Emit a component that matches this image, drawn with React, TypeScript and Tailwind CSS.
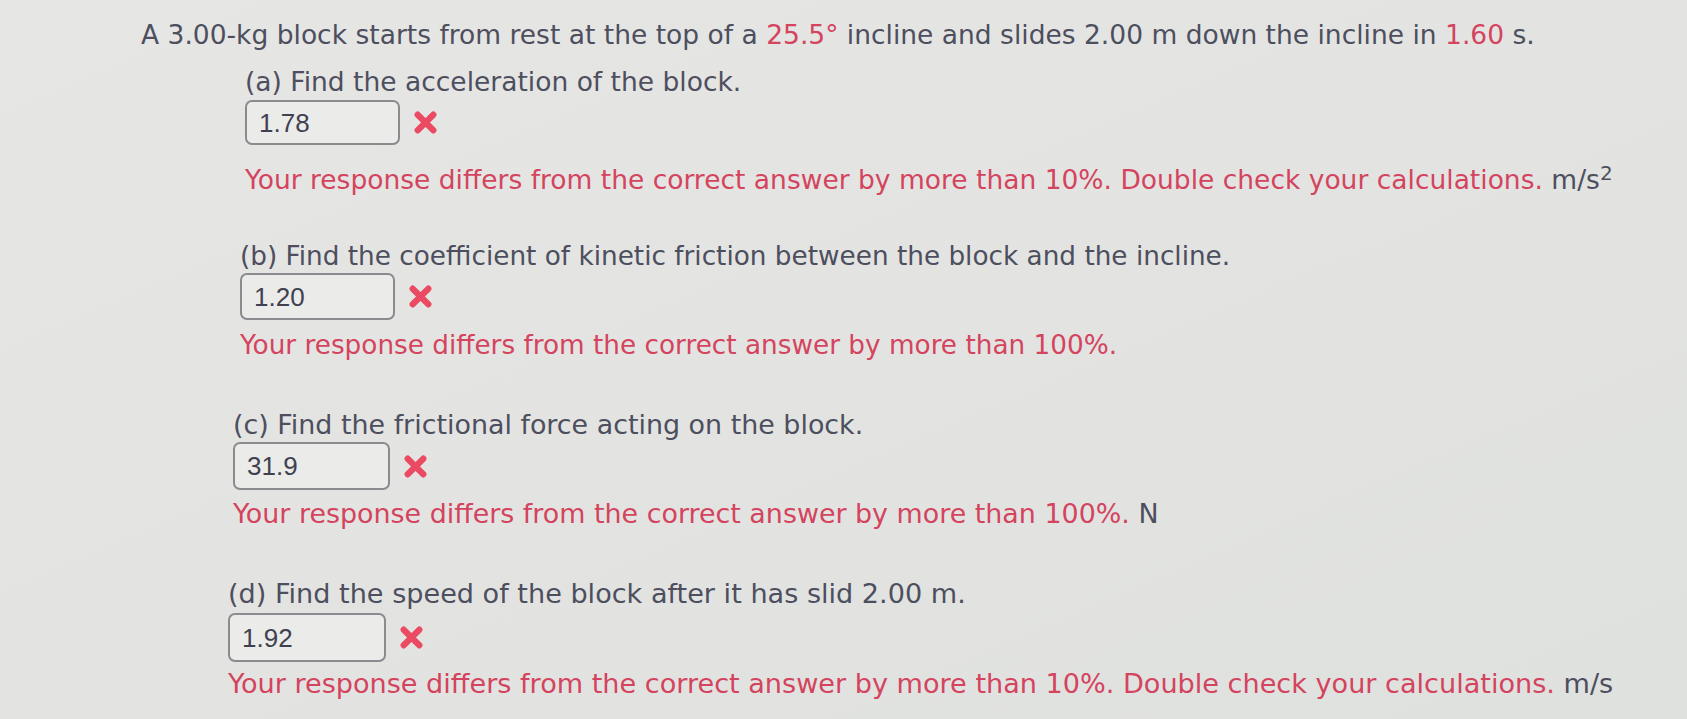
const red = "text-[#d4445e]";

function WrongMark() {
  return (
    <svg width="25" height="25" viewBox="0 0 24 24" className="ml-[13px] shrink-0">
      <path
        d="M4.5 4.5 L19.5 19.5 M19.5 4.5 L4.5 19.5"
        stroke="#ea4a62"
        strokeWidth="6"
        strokeLinecap="round"
      />
    </svg>
  );
}

function AnswerBox({ value, width, height }: { value: string; width: string; height: string }) {
  return (
    <div className="flex items-center">
      <div
        className={`${width} ${height} flex items-center rounded-[7px] border-2 border-[#8a8b8f] bg-[#ebebea] pl-[12px] text-[26px] text-[#3f4150] font-['Liberation_Sans',Arial,sans-serif]`}
      >
        {value}
      </div>
      <WrongMark />
    </div>
  );
}

const parts = [
  {
    label: "(a) Find the acceleration of the block.",
    value: "1.78",
    feedback: "Your response differs from the correct answer by more than 10%. Double check your calculations.",
    unit: (
      <>
        m/s<sup className="text-[20px] relative -top-[9px]">2</sup>
      </>
    ),
    pad: "pl-[245px]",
    top: "mt-[17px]",
    size: "text-[26.5px]",
    boxW: "w-[155px]",
    boxH: "h-[45px]",
    boxGap: "mt-[3px]",
    errGap: "mt-[20px]",
  },
  {
    label: "(b) Find the coefficient of kinetic friction between the block and the incline.",
    value: "1.20",
    feedback: "Your response differs from the correct answer by more than 100%.",
    unit: null,
    pad: "pl-[240px]",
    top: "mt-[46px]",
    size: "text-[26.3px]",
    boxW: "w-[155px]",
    boxH: "h-[47px]",
    boxGap: "mt-[2px]",
    errGap: "mt-[10px]",
  },
  {
    label: "(c) Find the frictional force acting on the block.",
    value: "31.9",
    feedback: "Your response differs from the correct answer by more than 100%.",
    unit: <>N</>,
    pad: "pl-[233px]",
    top: "mt-[50px]",
    size: "text-[26.9px]",
    boxW: "w-[157px]",
    boxH: "h-[48px]",
    boxGap: "mt-[2px]",
    errGap: "mt-[9px]",
  },
  {
    label: "(d) Find the speed of the block after it has slid 2.00 m.",
    value: "1.92",
    feedback: "Your response differs from the correct answer by more than 10%. Double check your calculations.",
    unit: <>m/s</>,
    pad: "pl-[228px]",
    top: "mt-[50px]",
    size: "text-[27.1px]",
    boxW: "w-[158px]",
    boxH: "h-[49px]",
    boxGap: "mt-[4px]",
    errGap: "mt-[7px]",
  },
];

export default function App() {
  return (
    <div className="w-full h-[719px] overflow-hidden bg-gradient-to-br from-[#e6e6e4] via-[#e3e4e2] to-[#dfe1df] pt-[20px] text-[#4d4f5e] font-['DejaVu_Sans',Verdana,sans-serif] text-[26.5px] leading-[30px]">
      <p className="pl-[141px] whitespace-nowrap">
        A 3.00-kg block starts from rest at the top of a <span className={red}>25.5°</span> incline and slides 2.00 m
        down the incline in <span className={red}>1.60</span> s.
      </p>

      {parts.map((p) => (
        <section key={p.label} className={`${p.pad} ${p.top} ${p.size}`}>
          <p className="whitespace-nowrap">{p.label}</p>
          <div className={p.boxGap}>
            <AnswerBox value={p.value} width={p.boxW} height={p.boxH} />
          </div>
          <p className={`${p.errGap} whitespace-nowrap`}>
            <span className={red}>{p.feedback}</span>
            {p.unit && <> {p.unit}</>}
          </p>
        </section>
      ))}
    </div>
  );
}
